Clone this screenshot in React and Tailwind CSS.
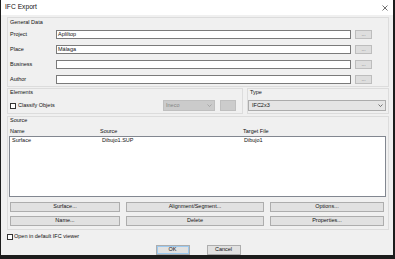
import React from "react";

const F = { fontFamily: '"Liberation Sans", Arial, sans-serif' };

function Chevron({ color = "#444" }) {
  return (
    <svg width="5" height="3" viewBox="0 0 5 3" className="shrink-0">
      <path d="M0.5 0.5 L2.5 2.5 L4.5 0.5" fill="none" stroke={color} strokeWidth="0.7" />
    </svg>
  );
}

function Btn({ w, children, className = "" }) {
  return (
    <div
      className={`h-[10px] flex items-center justify-center bg-[#e1e1e1] border border-[#adadad] text-[5.5px] text-[#111] leading-none ${className}`}
      style={{ width: w }}
    >
      {children}
    </div>
  );
}

function Row({ label, value }) {
  return (
    <div className="h-[9px] flex items-center">
      <div className="w-[48px] pl-[2px] text-[5.5px] leading-none text-[#111]">{label}</div>
      <div className="w-[295px] h-[9px] bg-white border border-[#7a7a7a] flex items-center pl-[1px] text-[5.5px] leading-none text-[#111]">
        {value}
      </div>
      <div className="ml-[4px] w-[17px] h-[9px] bg-[#dedede] border border-[#bdbdbd] flex items-center justify-center text-[5px] leading-none text-[#666]">
        ...
      </div>
    </div>
  );
}

export default function App() {
  return (
    <div className="w-[395px] h-[259px] bg-[#1c1c1c] pl-[1px] pr-[2px] pb-[4px]" style={F}>
      <div className="w-[392px] h-[255px] bg-[#f0f0f0] flex flex-col">
        <div className="h-[15px] shrink-0 bg-white flex items-center justify-between pl-[4px] pr-[5px]">
          <span className="text-[6.7px] leading-none text-[#111]">IFC Export</span>
          <svg width="6" height="6" viewBox="0 0 6 6">
            <path d="M0.5 0.5 L5.5 5.5 M5.5 0.5 L0.5 5.5" stroke="#333" strokeWidth="0.7" />
          </svg>
        </div>
        <div className="flex flex-col pl-[6px] pr-[4px]">
          {/* General Data */}
          <div className="mt-[2px] h-[70px] border border-[#dcdcdc] flex flex-col">
            <div className="h-[12px] pt-[1px] pl-[2px] text-[5.5px] leading-[7px] text-[#111]">General Data</div>
            <div className="flex flex-col gap-[6px]">
              <Row label="Project" value="Apliltop" />
              <Row label="Place" value="Málaga" />
              <Row label="Business" value="" />
              <Row label="Author" value="" />
            </div>
          </div>
          {/* Elements / Type */}
          <div className="mt-[1px] flex gap-[4px]">
            <div className="w-[236px] h-[26px] border border-[#dcdcdc] flex flex-col">
              <div className="h-[11px] pl-[2px] text-[5.5px] leading-[7px] text-[#111]">Elements</div>
              <div className="h-[11px] flex items-center pl-[2px] pr-[6px]">
                <div className="w-[6px] h-[6px] bg-white border border-[#333]" />
                <span className="ml-[2px] text-[5.5px] leading-none text-[#111]">Classify Objets</span>
                <div className="ml-auto w-[52px] h-[11px] bg-[#cbcbcb] border border-[#bfbfbf] flex items-center justify-between pl-[2px] pr-[2px]">
                  <span className="text-[5.5px] leading-none text-[#858585]">Ineco</span>
                  <Chevron color="#9a9a9a" />
                </div>
                <div className="ml-[5px] w-[16px] h-[11px] bg-[#cccccc] border border-[#bfbfbf]" />
              </div>
            </div>
            <div className="flex-1 h-[26px] border border-[#dcdcdc] flex flex-col pr-[2px]">
              <div className="h-[11px] pl-[2px] text-[5.5px] leading-[7px] text-[#111]">Type</div>
              <div className="h-[11px] bg-[#e5e5e5] border border-[#acacac] flex items-center justify-between pl-[3px] pr-[2px]">
                <span className="text-[5.5px] leading-none text-[#111]">IFC2x3</span>
                <Chevron />
              </div>
            </div>
          </div>
          {/* Source */}
          <div className="mt-[2px] border border-[#dcdcdc] flex flex-col pb-[3px]">
            <div className="h-[7px] pl-[2px] text-[5.5px] leading-[7px] text-[#111]">Source</div>
            <div className="h-[12px] flex items-end pb-[1px] pl-[2px] text-[5.5px] leading-[7px] text-[#111]">
              <span className="w-[90px]">Name</span>
              <span className="w-[143px]">Source</span>
              <span>Target File</span>
            </div>
            <div className="ml-[1px] mr-[2px] h-[61px] bg-white border border-[#828790] flex flex-col">
              <div className="h-[8px] flex items-center pl-[2px] text-[5.5px] leading-none text-[#111]">
                <span className="w-[90px]">Surface</span>
                <span className="w-[142px]">Dibujo1.SUP</span>
                <span>Dibujo1</span>
              </div>
            </div>
            <div className="mt-[5px] ml-[2px] flex gap-[6px]">
              <Btn w={110}>Surface...</Btn>
              <Btn w={138}>Alignment/Segment...</Btn>
              <Btn w={114}>Options...</Btn>
            </div>
            <div className="mt-[4px] ml-[2px] flex gap-[6px]">
              <Btn w={110}>Name...</Btn>
              <Btn w={138}>Delete</Btn>
              <Btn w={114}>Properties...</Btn>
            </div>
          </div>
          {/* Open in viewer */}
          <div className="mt-[4px] h-[6px] flex items-center">
            <div className="w-[6px] h-[6px] bg-white border border-[#333]" />
            <span className="ml-[1px] text-[5.5px] leading-none text-[#111]">Open in default IFC viewer</span>
          </div>
          <div className="mt-[5px] flex justify-center gap-[17px]">
            <Btn w={34} className="border-[#0078d7] ring-1 ring-inset ring-[#9cc9ef]">OK</Btn>
            <Btn w={34}>Cancel</Btn>
          </div>
        </div>
      </div>
    </div>
  );
}
